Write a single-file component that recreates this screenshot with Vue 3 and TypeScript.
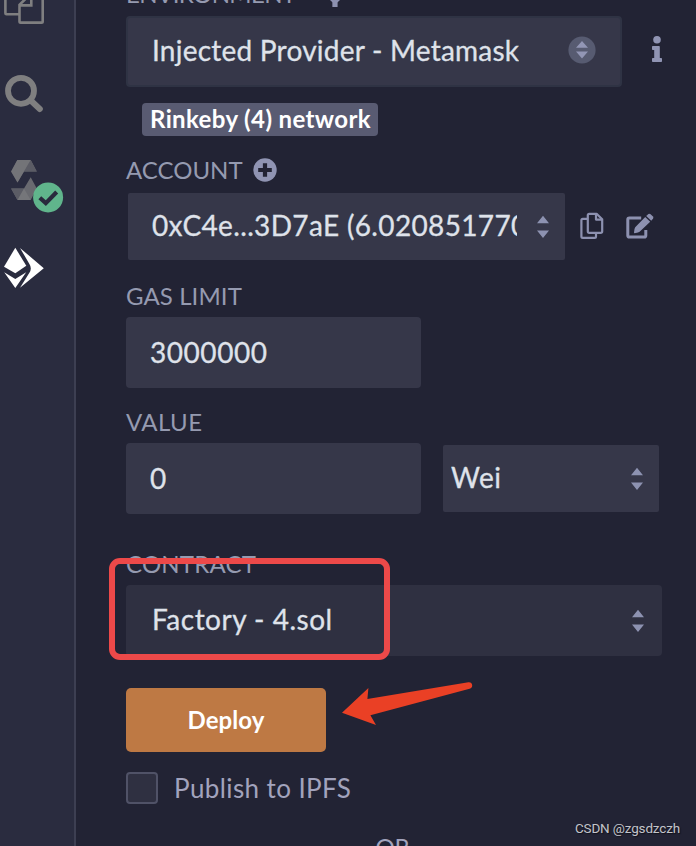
<script setup lang="ts">
import { ref } from 'vue'

const environment = ref('Injected Provider - Metamask')
const network = ref('Rinkeby (4) network')
const account = ref('0xC4e...3D7aE (6.020851770 ether)')
const gasLimit = ref('3000000')
const amount = ref('0')
const unit = ref('Wei')
const contract = ref('Factory - 4.sol')
</script>

<template>
  <div class="app">
    <nav class="sidebar">
      <svg class="icon files" width="74" height="24" viewBox="0 0 74 24" fill="none" stroke="#7f7f80" stroke-width="2.6">
        <path d="M5.4 -4V13.2Q5.4 14.3 6.5 14.3H19.5" />
        <path d="M42.7 -4V21.4Q42.7 22.6 41.5 22.6H20.7Q19.5 22.6 19.5 21.4V4.8L29 -4.5M20.5 5.4H31.3V-4" />
      </svg>
      <svg class="icon search" width="74" height="40" viewBox="0 74 74 40" fill="none" stroke="#7f7f80">
        <circle cx="21" cy="90.8" r="13" stroke-width="5.8" />
        <path d="M30.5 100.3L39.8 109" stroke-width="6" stroke-linecap="round" />
      </svg>
      <svg class="icon compiler" width="74" height="54" viewBox="0 160 74 54">
        <path fill="#696a70" d="M17.3 160H30.7L36.8 171.6H24L17.5 182.6L11.1 171.6ZM30.7 177.3L36.8 188.6L30.7 200H17.5L11.1 188.6H24Z" />
        <path fill="#7a7a7d" d="M17.3 160L24 171.6L17.5 182.6L11.1 171.6ZM17.3 160H30.7L24 171.6Z" opacity=".65" />
        <path fill="#5b5c65" d="M30.7 160L36.8 171.6H24ZM11.1 188.6H24L17.5 200Z" />
        <path fill="#818183" d="M24 188.6L30.7 200H17.5Z" opacity=".5" />
        <circle cx="48.1" cy="197.4" r="15" fill="#60b58c" />
        <path d="M39.8 197.7L45.8 203.1L56.7 192" fill="none" stroke="#292a3d" stroke-width="4.2" />
      </svg>
      <svg class="icon deploy-run" width="74" height="42" viewBox="0 247 74 42" fill="#fff">
        <path d="M15.3 247.8L26.3 265.8L15.3 273.3L4 266.7Z" />
        <path d="M4.2 272.3L15.3 278.9L26.2 272.3L15.3 288Z" />
        <path d="M20 247.9L43.8 268.3L20 287.8L29.4 272.8Q32.2 268.4 29.4 264Z" />
      </svg>
    </nav>

    <main class="panel">
      <div class="label first">
        <span class="t-env">ENVIRONMENT</span>
        <svg class="plug" width="12" height="30" viewBox="0 0 12 30" fill="#8d91b0">
          <path d="M2 8H4V3H5V8H7V3H8V8H10V14Q10 19 8.3 20.5V27H3.6V20.5Q2 19 2 14Z" />
          <path d="M1 20H11L8.4 22.4V27H3.6V22.4Z" />
        </svg>
      </div>
      <div class="row">
        <div class="select env">
          <span class="value t-injected">{{ environment }}</span>
          <svg class="knob" width="28" height="28" viewBox="0 0 28 28">
            <circle cx="14" cy="14" r="13.6" fill="#575b71" />
            <path d="M14 5L20 11.8H8ZM8 15.6H20L14 22.6Z" fill="#9296b5" />
          </svg>
        </div>
        <svg class="info" width="12" height="28" viewBox="0 0 12 28" fill="#9094b3">
          <circle cx="6" cy="4.8" r="3.8" />
          <path d="M1.8 11H8Q8.8 11 8.8 11.8V23H10.2Q11 23 11 23.8V26.2Q11 27 10.2 27H1.8Q1 27 1 26.2V23.8Q1 23 1.8 23H3.2V15H1.8Q1 15 1 14.2V11.8Q1 11 1.8 11Z" />
        </svg>
      </div>
      <div class="badge">{{ network }}</div>

      <div class="label account-label">
        <span>ACCOUNT</span>
        <svg class="plus" width="24" height="24" viewBox="0 0 24 24">
          <circle cx="12" cy="12" r="11.7" fill="#9094b3" />
          <path d="M12 5.2V18.8M5.2 12H18.8" stroke="#222334" stroke-width="4.2" />
        </svg>
      </div>
      <div class="row">
        <div class="select account">
          <span class="value t-account">{{ account }}</span>
          <svg class="arrows" width="12" height="24" viewBox="0 0 12 24"><path d="M6 .8L12 8.2H0ZM0 15.6H12L6 23Z" fill="#8d92b1" /></svg>
        </div>
        <svg class="copy" width="24" height="28" viewBox="0 0 24 28" fill="none" stroke="#8d91b0" stroke-width="2.2" stroke-linejoin="round">
          <path d="M7.5 6.8H2.8Q1.4 6.8 1.4 8.2V24.4Q1.4 25.8 2.8 25.8H14.6Q16 25.8 16 24.4V21.4" />
          <path d="M9.2 1.8H16.6L22.2 7.2V19.2Q22.2 20.8 20.6 20.8H9.2Q7.8 20.8 7.8 19.2V3.2Q7.8 1.8 9.2 1.8Z" />
          <path d="M16 2V7.6H22" />
        </svg>
        <svg class="edit" width="28" height="26" viewBox="0 0 28 26" fill="none">
          <path d="M15.2 4.9H3.4Q1.8 4.9 1.8 6.5V22.4Q1.8 24 3.4 24H18.2Q19.8 24 19.8 22.4V17" stroke="#8d91b0" stroke-width="3" />
          <path d="M19.2 4L24.2 8.8L13.6 18.8Q12.8 19.6 8.6 20.2Q8 20.2 8 19.4Q8.4 15.2 9.2 14.2Z" fill="#8d91b0" />
          <path d="M20.2 3L22.4 1Q23.4 .2 24.6 1.2L27 3.6Q27.8 4.6 27 5.8L25.2 7.8Z" fill="#8d91b0" />
        </svg>
      </div>

      <div class="label"><span class="t-gas">GAS LIMIT</span></div>
      <div class="input">{{ gasLimit }}</div>

      <div class="label value-label"><span class="t-value">VALUE</span></div>
      <div class="row">
        <div class="input">{{ amount }}</div>
        <div class="select unit">
          <span class="value t-wei">{{ unit }}</span>
          <svg class="arrows" width="12" height="24" viewBox="0 0 12 24"><path d="M6 .8L12 8.2H0ZM0 15.6H12L6 23Z" fill="#8d92b1" /></svg>
        </div>
      </div>

      <div class="label contract-label"><span class="t-contract">CONTRACT</span></div>
      <div class="select contract">
        <span class="value t-factory">{{ contract }}</span>
        <svg class="arrows" width="12" height="24" viewBox="0 0 12 24"><path d="M6 .8L12 8.2H0ZM0 15.6H12L6 23Z" fill="#8d92b1" /></svg>
        <div class="highlight"></div>
      </div>

      <div class="deploy">
        <button class="button" type="button">Deploy</button>
        <svg class="pointer" width="132" height="46" viewBox="342 681 132 46" fill="#ea4025">
          <path d="M342 712.7L368.4 688L367.4 699L468.4 682.2Q471.8 681.9 472.2 685.2Q472.3 688 469.6 688.8L370.4 715.3L376 725Z" />
        </svg>
      </div>
      <label class="publish"><span class="checkbox"></span><span>Publish to IPFS</span></label>
      <div class="or">OR</div>
    </main>
    <div class="watermark">CSDN @zgsdzczh</div>
  </div>
</template>

<style>
body {
  background: #222334;
}
</style>

<style scoped>
.app {
  position: relative;
  display: flex;
  box-sizing: border-box;
  width: 696px;
  height: 846px;
  overflow: hidden;
  background: #222334;
  color: #dfe2ea;
  font-family: Lato, "Liberation Sans", sans-serif;
}
.app * {
  box-sizing: border-box;
}
svg {
  display: block;
  flex: none;
}
.sidebar {
  display: flex;
  flex: none;
  flex-direction: column;
  width: 76px;
  border-right: 2px solid #3d3f52;
  background: #2a2c3f;
}
.search {
  margin-top: 50px;
}
.compiler {
  margin-top: 46px;
}
.deploy-run {
  margin-top: 33px;
}
.panel {
  display: flex;
  flex: 1;
  flex-direction: column;
  align-items: flex-start;
  padding-left: 50px;
}
.row {
  display: flex;
  align-items: center;
}
.label {
  display: flex;
  flex: none;
  align-items: flex-end;
  height: 57px;
  padding-bottom: 9px;
  color: #959ab0;
  font-size: 24px;
  line-height: 24px;
}
.label.first {
  height: 34px;
  margin-top: -18px;
  padding-bottom: 10px;
}
.account-label {
  padding-bottom: 11px;
}
.value-label {
  height: 55px;
}
.contract-label {
  height: 71px;
}
.plug {
  margin: 0 0 -4px 33px;
}
.plus {
  margin-left: 10px;
}
.select {
  position: relative;
  display: flex;
  flex: none;
  align-items: center;
  justify-content: space-between;
  background: #363749;
  border-radius: 2px;
  font-size: 28px;
  line-height: 34px;
}
.value {
  padding-bottom: 4px;
  overflow: hidden;
  white-space: nowrap;
}
.value,
.input {
  -webkit-text-stroke: 0.3px currentColor;
}
.env {
  width: 496px;
  height: 71px;
  padding: 0 24px;
  border: 2px solid #2f3344;
  border-radius: 4px;
}
.knob {
  margin-top: -4px;
}
.info {
  margin-left: 29px;
  margin-top: -5px;
}
.badge {
  flex: none;
  height: 33px;
  margin: 16px 0 0 16px;
  padding: 0 7px 0 8px;
  border-radius: 4px;
  background: #595b72;
  color: #fff;
  font-size: 24px;
  font-weight: 700;
  letter-spacing: 0.38px;
  line-height: 31px;
}
.account {
  width: 437px;
  height: 67px;
  margin-left: 2px;
  padding: 0 16px 0 24px;
}
.account .value {
  width: 365px;
}
.copy {
  margin-left: 15px;
  margin-top: -1px;
}
.edit {
  margin-left: 22px;
  margin-top: -2px;
}
.input {
  flex: none;
  width: 295px;
  height: 71px;
  padding: 0 24px;
  border-radius: 4px;
  background: #363749;
  font-size: 28px;
  letter-spacing: 0.55px;
  line-height: 70px;
}
.unit {
  width: 216px;
  height: 67px;
  margin-left: 22px;
  padding: 0 16px 0 8px;
}
.contract {
  width: 536px;
  height: 71px;
  padding: 0 18px 0 26px;
  border-radius: 4px;
  background: #2f3041;
}
.highlight {
  position: absolute;
  top: -27px;
  left: -17px;
  width: 281px;
  height: 101.5px;
  border: 6px solid #ed4949;
  border-radius: 11px;
}
.t-env {
  letter-spacing: -0.6px;
}
.t-injected {
  letter-spacing: 0.23px;
}
.t-account {
  letter-spacing: 0.35px;
}
.t-gas {
  letter-spacing: 0.1px;
}
.t-value {
  letter-spacing: 0.4px;
}
.t-contract {
  letter-spacing: 0.2px;
}
.t-wei {
  letter-spacing: 0.5px;
}
.t-factory {
  letter-spacing: 0.5px;
}
.deploy {
  display: flex;
  flex: none;
  margin-top: 32px;
}
.button {
  width: 200px;
  height: 64px;
  padding: 0 0 1px;
  border: 0;
  border-radius: 5px;
  background: #be7944;
  color: #fff;
  font-family: inherit;
  font-size: 24px;
  font-weight: 700;
  letter-spacing: 0.1px;
}
.pointer {
  margin: -7px 0 0 16px;
}
.publish {
  display: flex;
  flex: none;
  align-items: center;
  margin-top: 20px;
  color: #a2a3bd;
  font-size: 26px;
  letter-spacing: 0.4px;
  line-height: 32px;
}
.checkbox {
  width: 32px;
  height: 32px;
  margin-right: 16px;
  border: 2px solid #505267;
  border-radius: 4px;
  background: #2f3041;
}
.or {
  flex: none;
  align-self: center;
  margin: 28px 0 0 -37px;
  color: #a2a3bd;
  font-size: 24px;
  line-height: 30px;
}
.watermark {
  position: absolute;
  right: 16px;
  bottom: 9px;
  color: #c3c4ca;
  font-family: Roboto, sans-serif;
  font-size: 13.5px;
  letter-spacing: -0.16px;
  line-height: 18px;
  text-shadow: 1px 1px 1px #11121c;
}
</style>
